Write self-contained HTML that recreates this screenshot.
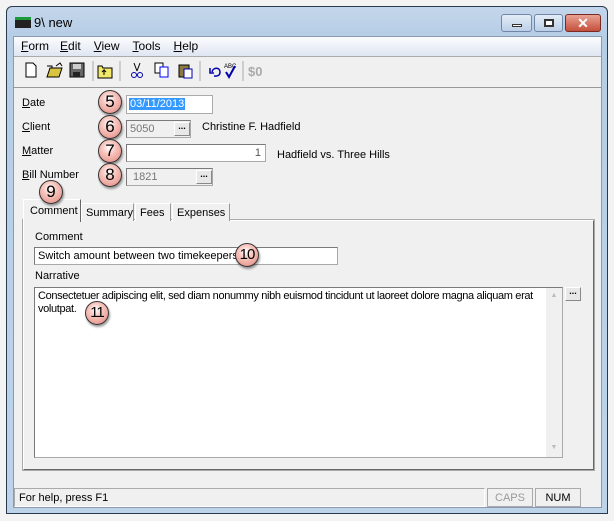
<!DOCTYPE html>
<html><head><meta charset="utf-8"><style>
*{margin:0;padding:0;box-sizing:border-box}
body{width:614px;height:521px;background:#f3f3f3;position:relative;overflow:hidden;font-family:"Liberation Sans",sans-serif;font-size:11px;color:#000}
.a{position:absolute}
.win{left:6px;top:6px;width:602px;height:508px;border:1px solid #2a3a4e;border-radius:6px 6px 0 0;background:linear-gradient(#c4d6ea,#b6cde6 30px,#bcd3ea);}
.lbl{font-size:11px}
.inp{background:#fff;border:1px solid #a9a9a9;border-top-color:#7a7a7a;border-left-color:#7a7a7a;height:18px}
.c{width:24px;height:24px;border-radius:50%;border:1.5px solid #333;background:radial-gradient(circle at 45% 35%,#fff 0,#f7c7c0 35%,#e2837a 100%);font-size:17px;text-align:center;line-height:21px;box-shadow:1px 2px 2px rgba(0,0,0,.4)}
.c2{font-size:15px;letter-spacing:-1px}
.dots{width:16px;height:14px;border:1px solid #888;border-top-color:#fff;border-left-color:#fff;background:#e8e8e8;font-size:9px;line-height:7px;text-align:center;font-weight:bold}
.tab{top:203px;height:18px;border:1px solid #999;border-bottom:none;border-top-color:#fff;border-left-color:#fff;background:#f0f0f0;padding:3px 4px 0;white-space:nowrap}
u{text-decoration:underline}
</style></head><body>
<div class="a win"></div>
<div class="a" style="left:15px;top:17px;width:16px;height:11px;background:#222;border-top:3px solid #1a9a3a"></div>
<div class="a" style="left:34px;top:15px;font-size:13px">9\ new</div>
<div class="a" style="left:501px;top:14px;width:31px;height:18px;border:1px solid #6f87a8;border-radius:3px;background:linear-gradient(#e4edf7,#bccfe6)"><div class="a" style="left:10px;top:9px;width:10px;height:3px;border:1px solid #333;background:#fff"></div></div>
<div class="a" style="left:534px;top:14px;width:29px;height:18px;border:1px solid #6f87a8;border-radius:3px;background:linear-gradient(#e4edf7,#bccfe6)"><div class="a" style="left:9px;top:4px;width:10px;height:8px;border:2px solid #333;background:#fff"></div></div>
<div class="a" style="left:565px;top:14px;width:36px;height:18px;border:1px solid #7a2a22;border-radius:3px;background:linear-gradient(#e9a394,#c44f3c);color:#fff;font-weight:bold;font-size:14px;text-align:center;line-height:16px">✕</div>
<div class="a" style="left:13px;top:36px;width:589px;height:472px;background:#f0f0f0;border:1px solid #8a9ab0"></div>
<div class="a" style="left:14px;top:37px;width:587px;height:19px;background:linear-gradient(#fbfcfe,#dfe6f2)"></div>
<div class="a" style="left:21px;top:39px;font-size:12px"><span><u>F</u>orm</span><span style="margin-left:11px"><u>E</u>dit</span><span style="margin-left:13px"><u>V</u>iew</span><span style="margin-left:13px"><u>T</u>ools</span><span style="margin-left:13px"><u>H</u>elp</span></div>
<div class="a" style="left:14px;top:56px;width:587px;height:1px;background:#aaa"></div>
<div class="a" style="left:14px;top:87px;width:587px;height:1px;background:#999"></div>
<svg class="a" style="left:14px;top:58px" width="270" height="28">
<path d="M12 5h7l3 3v11h-10z" fill="#fff" stroke="#000"/>
<path d="M36 10h12l-3 9h-12z" fill="#d8c440" stroke="#000"/><path d="M33 8h5v2" fill="none" stroke="#000"/><path d="M42 8l4-3 2 3" fill="none" stroke="#000"/>
<rect x="56" y="5" width="14" height="14" fill="#666" stroke="#000"/><rect x="59" y="6" width="8" height="5" fill="#ccc"/><rect x="59" y="14" width="7" height="5" fill="#222"/>
<line x1="79" y1="3" x2="79" y2="23" stroke="#aaa"/>
<path d="M84 8h4l1 2h9v10h-14z" fill="#f2e86a" stroke="#000"/><path d="M90 17v-5l-2 2M90 12l2 2" stroke="#000" fill="none"/>
<line x1="106" y1="3" x2="106" y2="23" stroke="#aaa"/>
<path d="M120 5l3 8M126 5l-3 8" stroke="#000"/><circle cx="120" cy="17" r="2.5" fill="none" stroke="#00a"/><circle cx="126" cy="17" r="2.5" fill="none" stroke="#00a"/>
<rect x="141" y="5" width="8" height="10" fill="#fff" stroke="#000"/><rect x="146" y="9" width="8" height="10" fill="#fff" stroke="#00f"/>
<rect x="165" y="7" width="10" height="12" fill="#8a7a40" stroke="#000"/><rect x="170" y="11" width="8" height="9" fill="#fff" stroke="#00a"/>
<line x1="186" y1="3" x2="186" y2="23" stroke="#aaa"/>
<path d="M198 14c1-5 8-5 8 0s-5 4-6 4" fill="none" stroke="#00a" stroke-width="1.5"/><path d="M196 10v5h4" fill="none" stroke="#00a" stroke-width="1.5"/>
<text x="210" y="10" font-size="6" font-family="Liberation Sans">ABC</text><path d="M212 14l3 5 6-11" fill="none" stroke="#00a" stroke-width="2"/>
<line x1="229" y1="3" x2="229" y2="23" stroke="#aaa"/>
<text x="234" y="18" font-size="13" font-weight="bold" fill="#aaa" font-family="Liberation Sans">$0</text>
</svg>
<div class="a lbl" style="left:22px;top:97px"><u>D</u>ate</div>
<div class="a lbl" style="left:22px;top:121px"><u>C</u>lient</div>
<div class="a lbl" style="left:22px;top:145px"><u>M</u>atter</div>
<div class="a lbl" style="left:22px;top:169px"><u>B</u>ill Number</div>
<div class="a inp" style="left:126px;top:95px;width:87px;height:19px;border-color:#aaa"><span style="background:#3399ff;color:#fff;margin-left:2px;padding:0 1px;line-height:16px">03/11/2013</span></div>
<div class="a inp" style="left:126px;top:120px;width:65px;background:#f0f0f0;color:#777;padding:2px 3px">5050</div>
<div class="a dots" style="left:174px;top:122px">...</div>
<div class="a" style="left:202px;top:121px">Christine F. Hadfield</div>
<div class="a inp" style="left:126px;top:144px;width:140px;text-align:right;padding:2px 4px;color:#555">1</div>
<div class="a" style="left:277px;top:149px">Hadfield vs. Three Hills</div>
<div class="a inp" style="left:126px;top:168px;width:87px;background:#f0f0f0;color:#777;padding:2px 6px">1821</div>
<div class="a dots" style="left:196px;top:170px">...</div>
<div class="a" style="left:23px;top:220px;width:571px;height:250px;border:1px solid #fff;border-right-color:#666;border-bottom-color:#666;outline:1px solid #aaa"></div>
<div class="a tab" style="left:81px;width:53px">Summary</div>
<div class="a tab" style="left:135px;width:36px">Fees</div>
<div class="a tab" style="left:172px;width:58px">Expenses</div>
<div class="a tab" style="left:23px;top:199px;width:58px;height:23px;border-color:#fff #666 transparent #fff;background:#f0f0f0;padding:5px 6px">Comment</div>
<div class="a lbl" style="left:35px;top:231px">Comment</div>
<div class="a inp" style="left:34px;top:247px;width:304px;padding:2px 3px">Switch amount between two timekeepers</div>
<div class="a lbl" style="left:35px;top:270px">Narrative</div>
<div class="a inp" style="left:34px;top:287px;width:529px;height:171px;padding:2px 17px 2px 3px;line-height:13px;letter-spacing:-0.35px">Consectetuer adipiscing elit, sed diam nonummy nibh euismod tincidunt ut laoreet dolore magna aliquam erat volutpat.</div>
<div class="a" style="left:546px;top:288px;width:16px;height:169px;background:#f0f0f0;color:#bbb;font-size:7px;text-align:center"><div style="margin-top:4px">▲</div><div style="margin-top:145px">▼</div></div>
<div class="a dots" style="left:565px;top:287px">...</div>
<div class="a" style="left:14px;top:488px;width:471px;height:19px;border:1px solid #aaa;border-right-color:#fff;border-bottom-color:#fff;padding:3px 4px">For help, press F1</div>
<div class="a" style="left:487px;top:488px;width:46px;height:19px;border:1px solid #aaa;color:#999;text-align:center;padding-top:3px">CAPS</div>
<div class="a" style="left:535px;top:488px;width:46px;height:19px;border:1px solid #aaa;text-align:center;padding-top:3px">NUM</div>
<div class="a c" style="left:98px;top:90px">5</div>
<div class="a c" style="left:98px;top:115px">6</div>
<div class="a c" style="left:98px;top:139px">7</div>
<div class="a c" style="left:98px;top:163px">8</div>
<div class="a c" style="left:39px;top:180px">9</div>
<div class="a c c2" style="left:235px;top:243px">10</div>
<div class="a c c2" style="left:85px;top:301px">11</div>
</body></html>
